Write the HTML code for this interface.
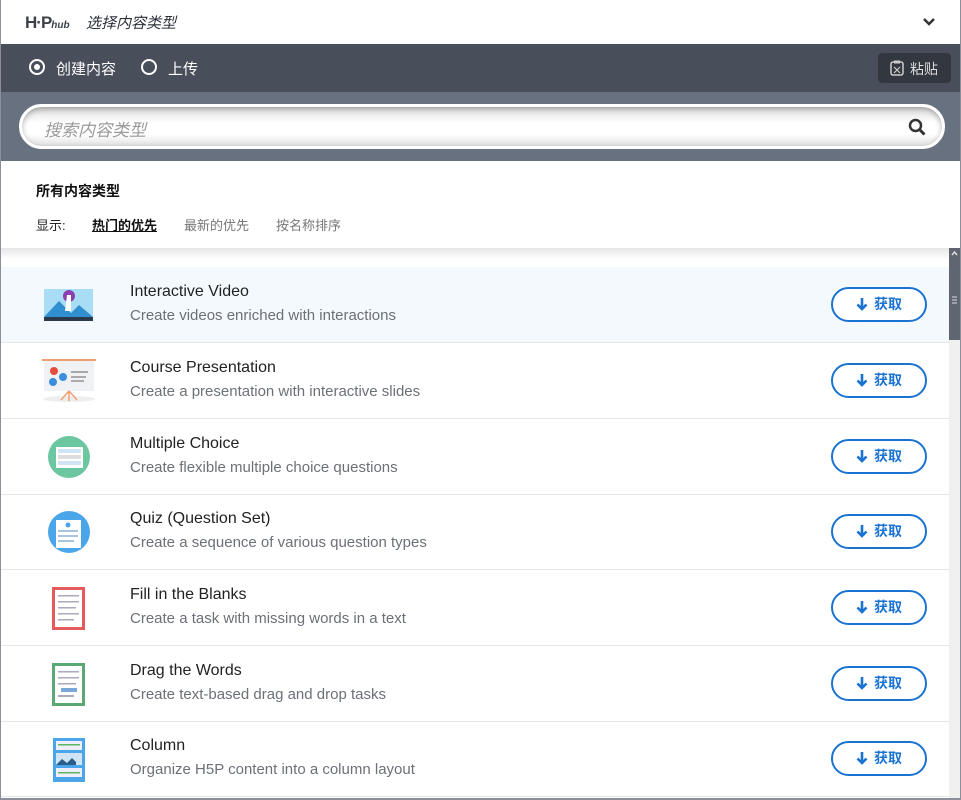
<!DOCTYPE html>
<html><head><meta charset="utf-8"><style>
*{box-sizing:border-box;margin:0;padding:0}
body{width:961px;height:800px;overflow:hidden;background:#fff;font-family:"Liberation Sans","Noto Sans CJK SC",sans-serif;position:relative}
.frame{position:absolute;left:0;top:0;width:961px;height:800px;border-left:1px solid #8a8f99;border-right:1px solid #8a8f99;border-bottom:2px solid #8a8f99}
.top{position:absolute;left:1px;top:0;width:959px;height:44px;background:#fff}
.logo{position:absolute;left:24px;top:13px;font-weight:bold;font-size:17px;color:#3c414a;letter-spacing:-1px}
.logo i{font-size:10px;font-style:italic;letter-spacing:0}
.title{position:absolute;left:85px;top:12px;font-size:15px;font-style:italic;color:#2a2f38}
.chev{position:absolute;right:24px;top:15px}
.bar{position:absolute;left:1px;top:44px;width:959px;height:48px;background:#484f5b;color:#fff;font-size:15px}
.radio{position:absolute;top:15px;width:16px;height:16px;border:2px solid #fff;border-radius:50%}
.radio.on::after{content:"";position:absolute;left:3px;top:3px;width:6px;height:6px;border-radius:50%;background:#fff}
.paste{position:absolute;right:9px;top:9px;width:73px;height:30px;background:#333840;border-radius:4px;font-size:14px;color:#ddd}
.sbar{position:absolute;left:1px;top:92px;width:959px;height:69px;background:#68717f}
.search{position:absolute;left:18px;top:12px;width:926px;height:45px;border:3px solid #fff;border-radius:24px;background:linear-gradient(#ddd,#fff 40%,#fff 70%,#e2e2e2);box-shadow:inset 0 2px 6px rgba(0,0,0,.3)}
.search span{position:absolute;left:22px;top:9px;font-size:17px;font-style:italic;color:#9a9a9a}
.hdr{position:absolute;left:36px;top:181px;font-size:14px;font-weight:bold;color:#111}
.show{position:absolute;top:215px;font-size:13px;color:#777}
.shadow{position:absolute;left:1px;top:248px;width:948px;height:19px;background:linear-gradient(#e6e6e6,#fff 60%);}
.row{position:absolute;left:1px;width:948px;height:76px;border-bottom:1px solid #e4e6e8}
.row .ic{position:absolute;left:40px;top:14px;width:56px;height:48px}
.row h3{position:absolute;left:129px;top:16px;font-size:16px;font-weight:normal;color:#222}
.row p{position:absolute;left:129px;top:40px;font-size:15px;color:#6c7077}
.btn{position:absolute;left:830px;top:20px;width:96px;height:35px;border:2px solid #1a73d0;border-radius:18px;color:#1a73d0;font-weight:bold;font-size:14px;text-align:center;line-height:31px;background:#fff}
.btn svg{vertical-align:-2px;margin-right:6px}
.scroll{position:absolute;left:949px;top:248px;width:11px;height:550px;background:#f0f0f0}
.thumb{position:absolute;left:0;top:0;width:11px;height:92px;background:#5f6672}
</style></head><body>
<div class="top">
 <div class="logo">H·P<i>hub</i></div>
 <div class="title">选择内容类型</div>
 <svg class="chev" width="14" height="14" viewBox="0 0 14 14"><path d="M2 4l5 5 5-5" stroke="#333" stroke-width="2.5" fill="none"/></svg>
</div>
<div class="bar">
 <div class="radio on" style="left:28px"></div><span style="position:absolute;left:55px;top:14px">创建内容</span>
 <div class="radio" style="left:140px"></div><span style="position:absolute;left:167px;top:14px">上传</span>
 <div class="paste"><svg style="position:absolute;left:12px;top:7px" width="14" height="16" viewBox="0 0 14 16"><rect x="1" y="2" width="12" height="13" rx="2" fill="none" stroke="#ccc" stroke-width="1.5"/><rect x="4" y="0.5" width="6" height="3" fill="#ccc"/><path d="M4 7l6 6M10 7l-6 6" stroke="#ccc" stroke-width="1.2"/></svg><span style="position:absolute;left:32px;top:6px">粘贴</span></div>
</div>
<div class="sbar"><div class="search"><span>搜索内容类型</span>
<svg style="position:absolute;right:16px;top:11px" width="18" height="18" viewBox="0 0 18 18"><circle cx="7.5" cy="7.5" r="5.5" stroke="#333" stroke-width="2.5" fill="none"/><path d="M11.5 11.5l5 5" stroke="#333" stroke-width="3"/></svg></div></div>
<div class="hdr">所有内容类型</div>
<div class="show" style="left:36px;color:#222">显示:</div>
<div class="show" style="left:92px;color:#111;font-weight:bold;text-decoration:underline">热门的优先</div>
<div class="show" style="left:184px">最新的优先</div>
<div class="show" style="left:276px">按名称排序</div>
<div class="shadow"></div>

<div class="row" style="top:267px;background:#f4f9fd"><svg class="ic" viewBox="0 0 56 48"><rect x="3" y="8" width="49" height="32" fill="#a9dcf5"/><path d="M3 36L18 20 30 32 38 24 52 36z" fill="#2f8fcf"/><circle cx="28" cy="15" r="6" fill="#8b3fb0"/><path d="M26 14h4v16l-6 0z" fill="#fff"/><rect x="3" y="36" width="49" height="4" fill="#2a3a4a"/></svg>
<h3>Interactive Video</h3><p>Create videos enriched with interactions</p><div class="btn"><svg width="12" height="14" viewBox="0 0 12 14"><path d="M6 1v11M1.5 7.5L6 12l4.5-4.5" stroke="#1a73d0" stroke-width="2.6" fill="none"/></svg>获取</div></div>
<div class="row" style="top:343px"><svg class="ic" viewBox="0 0 56 48"><ellipse cx="28" cy="42" rx="26" ry="3" fill="#eee"/><rect x="3" y="3" width="50" height="31" fill="#f0f1f5"/><rect x="1" y="2" width="54" height="2" fill="#f0a070"/><circle cx="13" cy="14" r="4" fill="#e74c3c"/><circle cx="12" cy="25" r="4" fill="#3a8edb"/><circle cx="22" cy="20" r="4" fill="#3a8edb"/><rect x="30" y="14" width="17" height="2" fill="#aaa"/><rect x="30" y="19" width="15" height="2" fill="#aaa"/><rect x="30" y="23" width="13" height="2" fill="#aaa"/><path d="M28 34l-8 9M28 34l8 9M28 34v10" stroke="#f0a070" stroke-width="1.5"/></svg>
<h3>Course Presentation</h3><p>Create a presentation with interactive slides</p><div class="btn"><svg width="12" height="14" viewBox="0 0 12 14"><path d="M6 1v11M1.5 7.5L6 12l4.5-4.5" stroke="#1a73d0" stroke-width="2.6" fill="none"/></svg>获取</div></div>
<div class="row" style="top:419px"><svg class="ic" viewBox="0 0 56 48"><circle cx="28" cy="24" r="21" fill="#6cc6a0"/><rect x="15" y="14" width="27" height="21" fill="#fff"/><rect x="17" y="16" width="23" height="4" fill="#cfe4f5"/><rect x="17" y="22" width="23" height="4" fill="#ddd"/><rect x="17" y="28" width="23" height="4" fill="#cfe4f5"/></svg>
<h3>Multiple Choice</h3><p>Create flexible multiple choice questions</p><div class="btn"><svg width="12" height="14" viewBox="0 0 12 14"><path d="M6 1v11M1.5 7.5L6 12l4.5-4.5" stroke="#1a73d0" stroke-width="2.6" fill="none"/></svg>获取</div></div>
<div class="row" style="top:494px"><svg class="ic" viewBox="0 0 56 48"><circle cx="28" cy="24" r="21" fill="#4aa6e8"/><rect x="15" y="12" width="25" height="28" fill="#fff"/><circle cx="27" cy="17" r="2.5" fill="#4aa6e8"/><rect x="17" y="22" width="20" height="2" fill="#a9c4e0"/><rect x="17" y="27" width="20" height="2" fill="#a9c4e0"/><rect x="17" y="32" width="16" height="2" fill="#a9c4e0"/></svg>
<h3>Quiz (Question Set)</h3><p>Create a sequence of various question types</p><div class="btn"><svg width="12" height="14" viewBox="0 0 12 14"><path d="M6 1v11M1.5 7.5L6 12l4.5-4.5" stroke="#1a73d0" stroke-width="2.6" fill="none"/></svg>获取</div></div>
<div class="row" style="top:570px"><svg class="ic" viewBox="0 0 56 48"><rect x="11" y="3" width="33" height="43" fill="#e55b5b"/><rect x="14" y="6" width="27" height="37" fill="#fff"/><g fill="#aab"><rect x="17" y="11" width="21" height="1.5"/><rect x="17" y="17" width="21" height="1.5"/><rect x="17" y="23" width="18" height="1.5"/><rect x="17" y="29" width="21" height="1.5"/><rect x="17" y="35" width="16" height="1.5"/></g></svg>
<h3>Fill in the Blanks</h3><p>Create a task with missing words in a text</p><div class="btn"><svg width="12" height="14" viewBox="0 0 12 14"><path d="M6 1v11M1.5 7.5L6 12l4.5-4.5" stroke="#1a73d0" stroke-width="2.6" fill="none"/></svg>获取</div></div>
<div class="row" style="top:646px"><svg class="ic" viewBox="0 0 56 48"><rect x="11" y="3" width="33" height="43" fill="#5ca874"/><rect x="14" y="6" width="27" height="37" fill="#fff"/><g fill="#aab"><rect x="17" y="11" width="21" height="1.5"/><rect x="17" y="17" width="21" height="1.5"/><rect x="17" y="23" width="18" height="1.5"/><rect x="17" y="35" width="16" height="2"/></g><rect x="20" y="28" width="16" height="4" fill="#7aa7d8"/></svg>
<h3>Drag the Words</h3><p>Create text-based drag and drop tasks</p><div class="btn"><svg width="12" height="14" viewBox="0 0 12 14"><path d="M6 1v11M1.5 7.5L6 12l4.5-4.5" stroke="#1a73d0" stroke-width="2.6" fill="none"/></svg>获取</div></div>
<div class="row" style="top:721px"><svg class="ic" viewBox="0 0 56 48"><rect x="12" y="3" width="32" height="44" fill="#4aa6e8"/><rect x="15" y="6" width="26" height="9" fill="#eef"/><rect x="15" y="18" width="26" height="12" fill="#cfe4f5"/><path d="M15 30l6-6 5 4 5-5 4 4v3z" fill="#2a5d8a"/><rect x="15" y="33" width="26" height="9" fill="#eef"/><rect x="17" y="9" width="22" height="1.5" fill="#5cb85c"/><rect x="17" y="37" width="22" height="1.5" fill="#5cb85c"/></svg>
<h3>Column</h3><p>Organize H5P content into a column layout</p><div class="btn"><svg width="12" height="14" viewBox="0 0 12 14"><path d="M6 1v11M1.5 7.5L6 12l4.5-4.5" stroke="#1a73d0" stroke-width="2.6" fill="none"/></svg>获取</div></div>

<div class="scroll"><div class="thumb"><svg width="11" height="92" viewBox="0 0 11 92"><path d="M3 7l2.5-3 2.5 3" stroke="#ddd" stroke-width="1.5" fill="none"/><path d="M3 49h5M3 52h5M3 55h5" stroke="#ddd" stroke-width="1"/></svg></div></div>
<div class="frame"></div>
</body></html>
